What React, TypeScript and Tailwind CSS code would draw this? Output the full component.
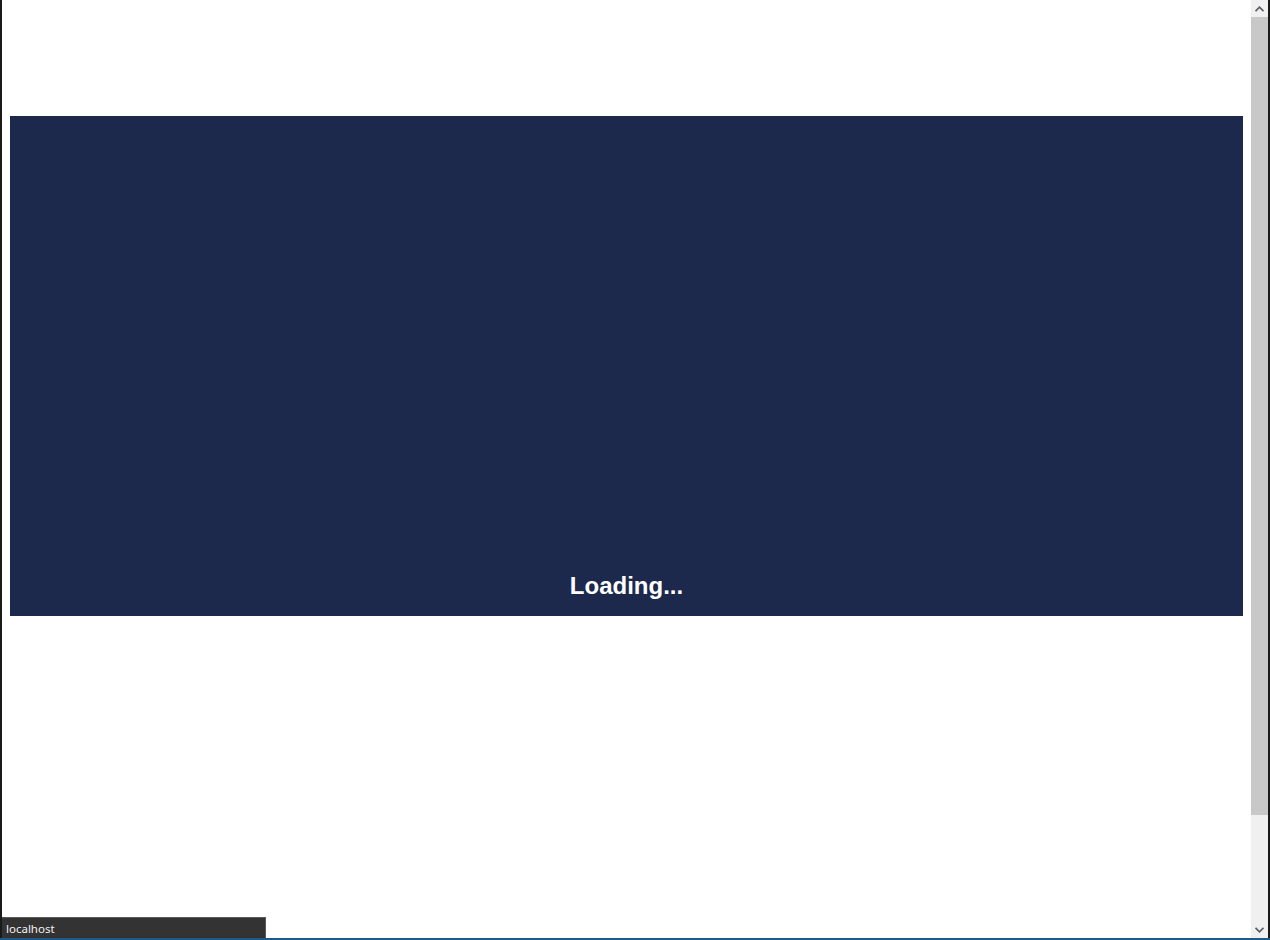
import React from "react";

function ChevronUp() {
  return (
    <svg width="9" height="6" viewBox="0 0 9 6" className="block">
      <path d="M0.5 5.2 L4.5 1.2 L8.5 5.2" fill="none" stroke="#5a5f6a" strokeWidth="1.8" />
    </svg>
  );
}

function ChevronDown() {
  return (
    <svg width="9" height="6" viewBox="0 0 9 6" className="block">
      <path d="M0.5 0.8 L4.5 4.8 L8.5 0.8" fill="none" stroke="#5a5f6a" strokeWidth="1.8" />
    </svg>
  );
}

export default function App() {
  return (
    <div className="relative w-[1270px] h-[940px] overflow-hidden flex flex-col bg-white">
      <div className="flex flex-1 min-h-0">
        <div className="w-[2px] bg-[#1a1a1a]" />
        <div className="flex-1 bg-white px-2 pt-[116px]">
          <div className="h-[500px] bg-[#1c294d] flex flex-col justify-end items-center pb-[16px]">
            <span
              className="text-white font-bold text-[24px] leading-[28px]"
              style={{ fontFamily: '"Liberation Sans", Arial, sans-serif' }}
            >
              Loading...
            </span>
          </div>
        </div>
        <div className="w-[17px] flex flex-col bg-[#f0f0f0]">
          <div className="h-[17px] flex items-center justify-center">
            <ChevronUp />
          </div>
          <div className="h-[798px] bg-[#c8c8c8]" />
          <div className="flex-1" />
          <div className="h-[17px] flex items-center justify-center">
            <ChevronDown />
          </div>
        </div>
        <div className="w-[2px] bg-[#1a1a1a]" />
      </div>
      <div className="h-[2px] bg-[#1d5a8a]" />
      <div
        className="absolute left-[2px] bottom-[2px] w-[264px] h-[21px] bg-[#333333] border-t border-r border-[#5a5a5a] flex items-center px-[4px] pt-[1px] text-[11.5px] text-[#f2f2f2]"
        style={{ fontFamily: '"Noto Sans", "Open Sans", sans-serif' }}
      >
        localhost
      </div>
    </div>
  );
}
